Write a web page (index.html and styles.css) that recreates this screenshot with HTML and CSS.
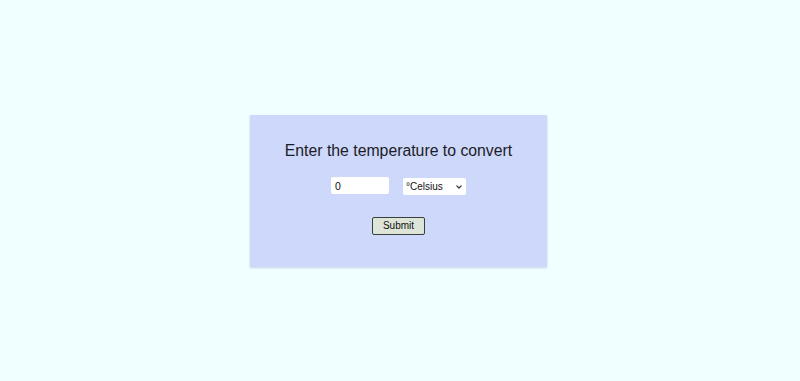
FILE: index.html
```
<!DOCTYPE html>
<html>
<head>
<meta charset="utf-8">
<link rel="stylesheet" href="styles.css">
</head>
<body>
<div class="page">
  <form class="card">
    <h1 class="title">Enter the temperature to convert</h1>
    <div class="row">
      <input class="num" type="text" value="0">
      <div class="select-wrap">
        <select class="unit">
          <option>°Celsius</option>
          <option>°Fahrenheit</option>
        </select>
        <svg class="chevron" width="6" height="4" viewBox="0 0 6 4" aria-hidden="true">
          <path d="M0.8 0.8 L3 3 L5.2 0.8" fill="none" stroke="#333" stroke-width="1.2" stroke-linecap="round" stroke-linejoin="round"/>
        </svg>
      </div>
    </div>
    <button class="submit" type="button">Submit</button>
  </form>
</div>
</body>
</html>
```
FILE: styles.css
```
html, body {
  margin: 0;
  height: 100%;
}
body {
  background: #f0ffff;
  font-family: "Liberation Sans", Arial, sans-serif;
}
.page {
  height: 100%;
  display: flex;
  align-items: center;
  justify-content: center;
  padding-right: 3px;
  box-sizing: border-box;
}
.card {
  width: 297px;
  height: 152px;
  box-sizing: border-box;
  background: #cdd8fb;
  box-shadow: 0 1px 2px rgba(120, 130, 160, 0.35);
  display: flex;
  flex-direction: column;
  align-items: center;
  padding-top: 26px;
}
.title {
  margin: 0;
  font-size: 15.8px;
  font-weight: normal;
  color: #1c1c26;
  line-height: 20px;
}
.row {
  display: flex;
  gap: 14px;
  margin-top: 16px;
  align-items: center;
}
.num {
  width: 58px;
  height: 17px;
  box-sizing: border-box;
  border: none;
  border-radius: 2px;
  background: #fff;
  padding: 0 4px;
  font-family: "Liberation Sans", Arial, sans-serif;
  font-size: 10.5px;
  color: #111;
  outline: none;
}
.select-wrap {
  position: relative;
  margin-top: 1px;
}
.unit {
  appearance: none;
  -webkit-appearance: none;
  display: block;
  width: 63px;
  height: 17px;
  box-sizing: border-box;
  border: none;
  border-radius: 2px;
  background: #fff;
  padding: 0 0 0 3px;
  font-family: "Liberation Sans", Arial, sans-serif;
  font-size: 10px;
  color: #111;
}
.chevron {
  position: absolute;
  right: 4px;
  top: 7px;
  pointer-events: none;
}
.submit {
  margin-top: 22px;
  width: 53px;
  height: 18px;
  padding: 0;
  border: 1px solid #3a3f3a;
  border-radius: 2px;
  background: #dde5d8;
  font-family: "Liberation Sans", Arial, sans-serif;
  font-size: 10px;
  color: #111;
}
```
